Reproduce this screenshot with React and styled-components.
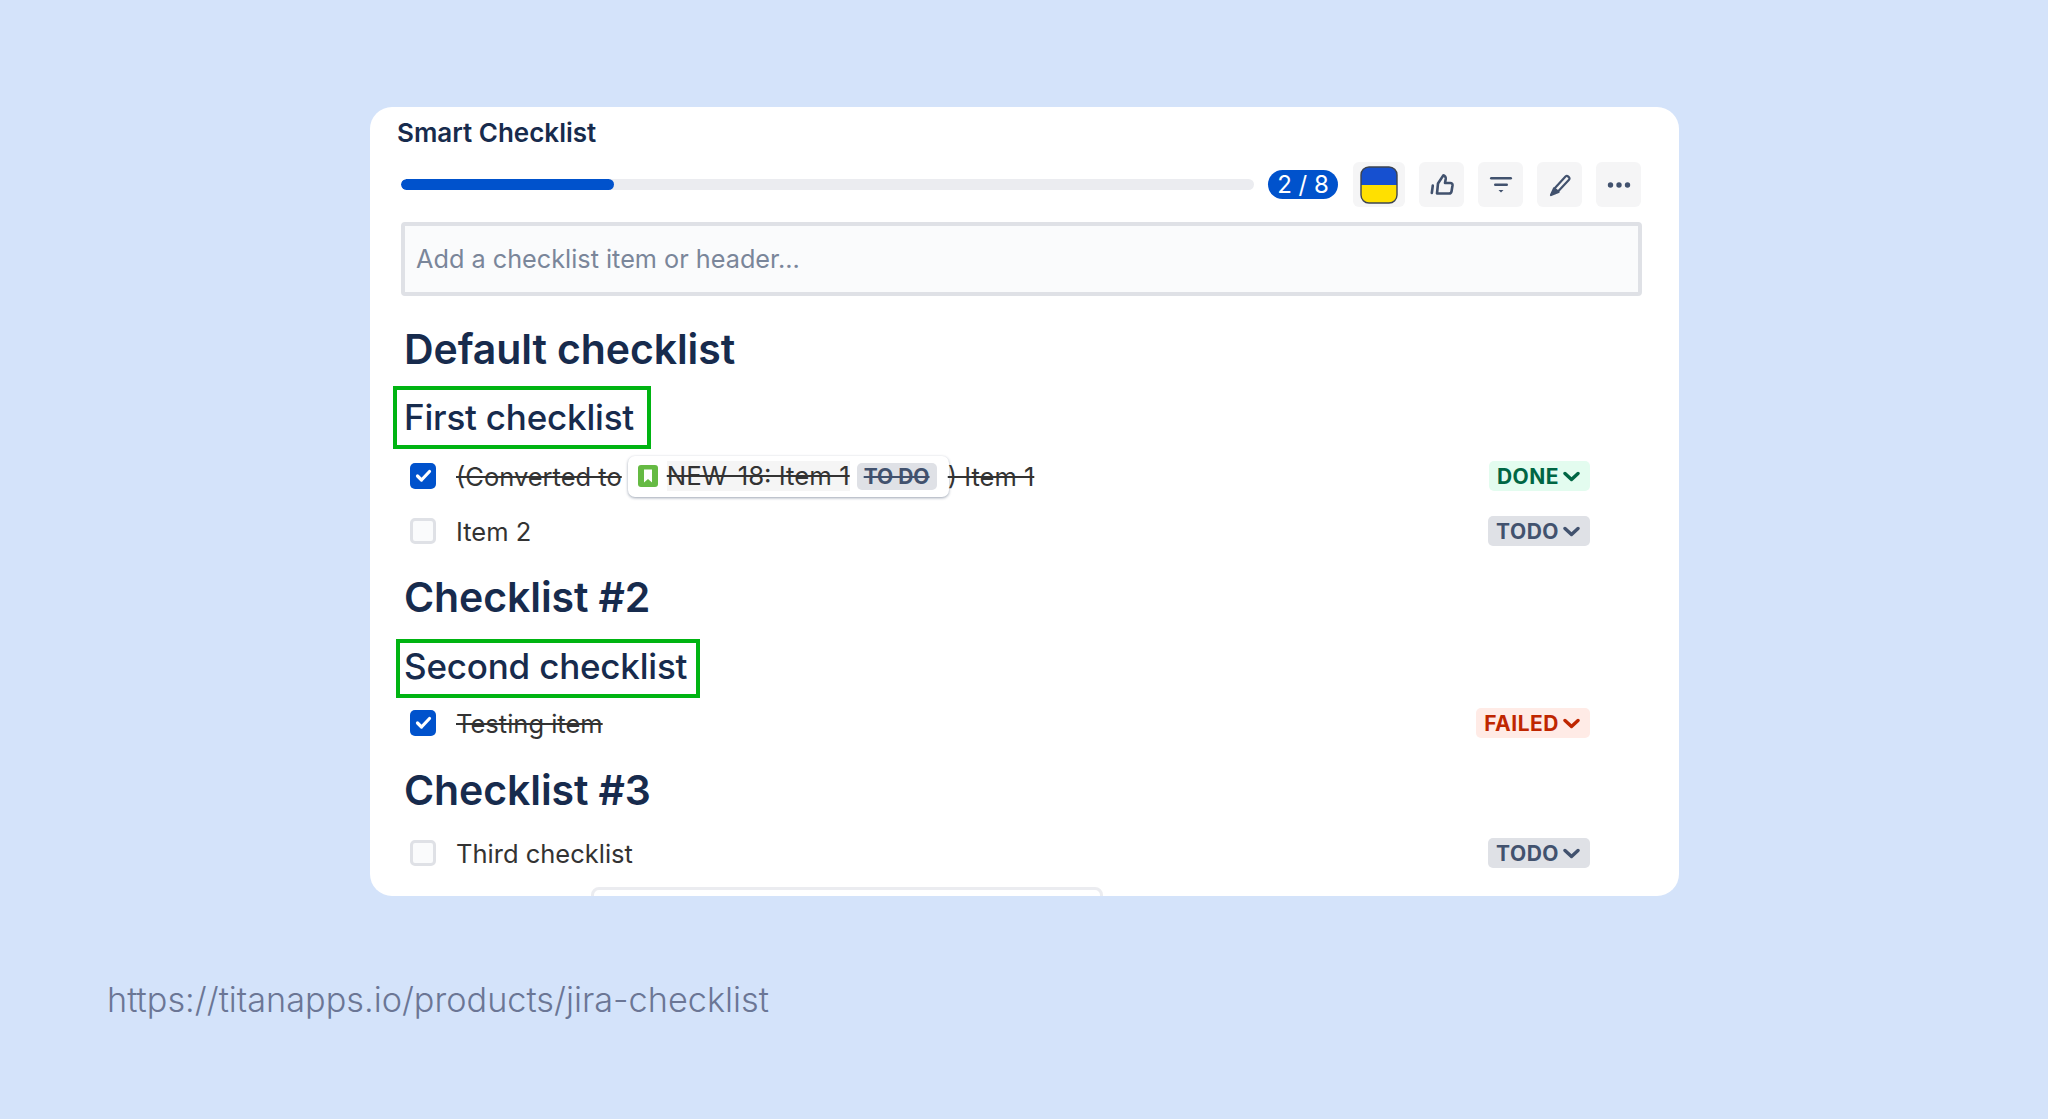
import React from "react";
import styled, { createGlobalStyle } from "styled-components";

const Global = createGlobalStyle`
  html, body { margin: 0; padding: 0; background: #d4e3fa; }
  body { font-family: Inter, "Liberation Sans", sans-serif; }
`;

const Page = styled.div`
  width: 2048px;
  height: 1119px;
  overflow: hidden;
  padding: 107px 0 0 370px;
  box-sizing: border-box;
  display: flex;
  flex-direction: column;
`;

const Card = styled.section`
  width: 1309px;
  height: 789px;
  flex: none;
  box-sizing: border-box;
  background: #fff;
  border-radius: 22px;
  padding: 10px 37px 0 27px;
  overflow: hidden;
  display: flex;
  flex-direction: column;
  & > * {
    flex-shrink: 0;
  }
`;

const Title = styled.h2`
  margin: 0;
  font-size: 26px;
  line-height: 32px;
  font-weight: 600;
  color: #172b4d;
`;

const Toolbar = styled.div`
  display: flex;
  align-items: center;
  margin: 13px 0 0 4px;
  height: 45px;
`;

const Track = styled.div`
  width: 853px;
  height: 11px;
  border-radius: 6px;
  background: #ebecf0;
  overflow: hidden;
`;

const Fill = styled.div`
  height: 100%;
  border-radius: 6px;
  background: #0052cc;
`;

const Count = styled.span`
  margin-left: 14px;
  width: 70px;
  height: 29px;
  border-radius: 15px;
  background: #0052cc;
  color: #fff;
  font-size: 24px;
  line-height: 29px;
  text-align: center;
`;

const IconButton = styled.button`
  width: ${(p) => p.$w || 45}px;
  height: 45px;
  margin-left: ${(p) => p.$gap}px;
  padding: 0;
  border: 0;
  border-radius: 6px;
  background: #f5f5f6;
  display: flex;
  align-items: center;
  justify-content: center;
  color: #42526e;
`;

const AddInput = styled.div`
  margin: 15px 0 0 4px;
  height: 74px;
  box-sizing: border-box;
  border: 4px solid #dfe1e6;
  border-radius: 4px;
  background: #fafbfc;
  padding: 0 11px;
  display: flex;
  align-items: center;
  font-size: 25.25px;
  color: #7a869a;
`;

const Section = styled.h3`
  margin: ${(p) => p.$top}px 0 0 7px;
  font-size: 41px;
  line-height: 52px;
  font-weight: 600;
  color: #172b4d;
  letter-spacing: -0.1px;
`;

const Group = styled.div`
  align-self: flex-start;
  margin: ${(p) => p.$top}px 0 0 ${(p) => p.$left}px;
  width: ${(p) => p.$w}px;
  height: ${(p) => p.$h}px;
  box-sizing: border-box;
  border: 4px solid #00b412;
  display: flex;
  align-items: center;
  padding-left: ${(p) => p.$pad}px;
  padding-bottom: ${(p) => p.$lift || 0}px;
  font-size: 35px;
  font-weight: 500;
  color: #172b4d;
  letter-spacing: -0.2px;
  white-space: nowrap;
`;

const Row = styled.div`
  margin: ${(p) => p.$top}px 0 0 13px;
  height: 40px;
  width: 1180px;
  display: flex;
  align-items: center;
  font-size: 25.5px;
  color: #333;
`;

const Box = styled.span`
  flex: none;
  width: 26px;
  height: 26px;
  box-sizing: border-box;
  border-radius: 5px;
  background: ${(p) => (p.$on ? "#0052cc" : "#fafbfc")};
  border: ${(p) => (p.$on ? "0" : "3px solid #dfe1e6")};
  display: flex;
  align-items: center;
  justify-content: center;
  margin-right: 20px;
`;

const Label = styled.span`
  text-decoration: ${(p) => (p.$done ? "line-through" : "none")};
  white-space: nowrap;
`;

const Chip = styled.span`
  display: inline-flex;
  align-items: center;
  height: 41px;
  width: 321px;
  box-sizing: border-box;
  margin: 0 -1px 0 6px;
  padding-left: 10px;
  border-radius: 7px;
  background: #fff;
  box-shadow: 0 1px 3px rgba(9, 30, 66, 0.4);
  flex: none;
`;

const IssueIcon = styled.span`
  width: 20px;
  height: 22px;
  flex: none;
  display: flex;
  margin-right: 9px;
`;

const IssueText = styled.span`
  background: #f5f5f5;
  text-decoration: line-through;
  white-space: nowrap;
  line-height: 30px;
  font-size: 25.8px;
`;

const ChipStatus = styled.span`
  margin-left: 7px;
  padding: 0 7px;
  height: 27px;
  line-height: 27px;
  border-radius: 5px;
  background: #dfe1e6;
  color: #42526e;
  font-size: 21px;
  font-weight: 700;
  text-decoration: line-through;
  white-space: nowrap;
`;

const Status = styled.span`
  margin-left: auto;
  height: 30px;
  box-sizing: border-box;
  padding: 0 10px 0 8px;
  border-radius: 5px;
  display: flex;
  align-items: center;
  gap: 4px;
  font-size: 21px;
  font-weight: 700;
  letter-spacing: 0.5px;
  background: ${(p) => p.$bg};
  color: ${(p) => p.$fg};
`;

const Peek = styled.div`
  margin: 14px 0 0 194px;
  width: 512px;
  height: 20px;
  box-sizing: border-box;
  border: 3px solid #ebecf0;
  border-radius: 8px;
`;

const Url = styled.div`
  margin: 83px 0 0 -263px;
  font-family: Inter, "Liberation Sans", sans-serif;
  font-size: 34.25px;
  font-weight: 300;
  line-height: 42px;
  color: #6b7695;
  white-space: nowrap;
`;

const Chevron = () => (
  <svg width="17" height="11" viewBox="0 0 17 11" fill="none">
    <path d="M2 2.5l6.5 6 6.5-6" stroke="currentColor" strokeWidth="3.4" strokeLinecap="round" strokeLinejoin="round" />
  </svg>
);

const Check = () => (
  <svg width="17" height="14" viewBox="0 0 17 14" fill="none">
    <path d="M2.5 7l4 4 8-8.5" stroke="#fff" strokeWidth="3.2" strokeLinecap="round" strokeLinejoin="round" />
  </svg>
);

const Flag = () => (
  <svg width="38" height="38" viewBox="0 0 38 38">
    <defs>
      <clipPath id="flagclip"><rect x="1" y="1" width="36" height="36" rx="8" /></clipPath>
    </defs>
    <g clipPath="url(#flagclip)">
      <rect width="38" height="19" y="0" fill="#1650d0" />
      <rect width="38" height="19" y="19" fill="#ffe000" />
    </g>
    <rect x="1" y="1" width="36" height="36" rx="8" fill="none" stroke="#3d4450" strokeWidth="1.4" />
  </svg>
);

const Thumb = () => (
  <svg width="24" height="24" viewBox="0 0 24 24" fill="none" stroke="currentColor" strokeWidth="2.6" strokeLinecap="round" strokeLinejoin="round">
    <path d="M2.8 12.5L1.8 20" />
    <path d="M7 20.5h12c1.5 0 2.3-.8 2.5-2l1-6c.2-1.4-.8-2.5-2.2-2.5H15l.7-4c.3-2-1-3.6-2.4-3.6L8 10.5 7 20.5z" />
  </svg>
);

const FilterIcon = () => (
  <svg width="24" height="20" viewBox="0 0 24 20" fill="currentColor">
    <rect x="1" y="2" width="22" height="2.4" rx="1.2" />
    <rect x="5" y="8.5" width="14" height="2.4" rx="1.2" />
    <path d="M9.5 15h5L12 17.6z" />
  </svg>
);

const Pencil = () => (
  <svg width="24" height="24" viewBox="0 0 24 24" fill="none" stroke="currentColor" strokeWidth="2.2" strokeLinejoin="round">
    <path d="M6.5 15.5L17.5 3.5c.8-.8 1.8-.8 2.5-.1l1 1c.7.7.7 1.7 0 2.4L10 18.5z" />
    <path d="M6 15.5l4.5 3.5-7.5 3z" fill="currentColor" />
  </svg>
);

const Dots = () => (
  <svg width="24" height="8" viewBox="0 0 24 8" fill="currentColor">
    <circle cx="3.5" cy="4" r="2.7" />
    <circle cx="12" cy="4" r="2.7" />
    <circle cx="20.5" cy="4" r="2.7" />
  </svg>
);

const Bookmark = () => (
  <svg width="20" height="22" viewBox="0 0 20 22">
    <rect width="20" height="22" rx="3" fill="#65ba43" />
    <path d="M6 4.5h8v13l-4-3.6-4 3.6z" fill="#fff" />
  </svg>
);

const tones = {
  DONE: ["#e3fcef", "#006644"],
  TODO: ["#dfe1e6", "#42526e"],
  FAILED: ["#ffebe6", "#bf2600"],
};

const StatusPill = ({ value }) => (
  <Status $bg={tones[value][0]} $fg={tones[value][1]}>
    {value}
    <Chevron />
  </Status>
);

export default function App() {
  return (
    <Page>
      <Global />
      <Card>
        <Title>Smart Checklist</Title>
        <Toolbar>
          <Track>
            <Fill style={{ width: `${(213 / 853) * 100}%` }} />
          </Track>
          <Count>2 / 8</Count>
          <IconButton $gap={15} $w={52}><Flag /></IconButton>
          <IconButton $gap={14}><Thumb /></IconButton>
          <IconButton $gap={14}><FilterIcon /></IconButton>
          <IconButton $gap={14}><Pencil /></IconButton>
          <IconButton $gap={14}><Dots /></IconButton>
        </Toolbar>
        <AddInput>Add a checklist item or header...</AddInput>

        <Section $top={27}>Default checklist</Section>
        <Group $top={11} $left={-4} $w={258} $h={63} $pad={7} $lift={2}>First checklist</Group>
        <Row $top={7}>
          <Box $on><Check /></Box>
          <Label $done>(Converted to</Label>
          <Chip>
            <IssueIcon><Bookmark /></IssueIcon>
            <IssueText>NEW-18: Item 1</IssueText>
            <ChipStatus>TO DO</ChipStatus>
          </Chip>
          <Label $done>) Item 1</Label>
          <StatusPill value="DONE" />
        </Row>
        <Row $top={15}>
          <Box />
          <Label>Item 2</Label>
          <StatusPill value="TODO" />
        </Row>
        <Section $top={20}>Checklist #2</Section>
        <Group $top={16} $left={-1} $w={304} $h={59} $pad={4} $lift={6}>Second checklist</Group>
        <Row $top={5}>
          <Box $on><Check /></Box>
          <Label $done>Testing item</Label>
          <StatusPill value="FAILED" />
        </Row>
        <Section $top={21}>Checklist #3</Section>
        <Row $top={17}>
          <Box />
          <Label>Third checklist</Label>
          <StatusPill value="TODO" />
        </Row>
        <Peek />
      </Card>
      <Url>https://titanapps.io/products/jira-checklist</Url>
    </Page>
  );
}
